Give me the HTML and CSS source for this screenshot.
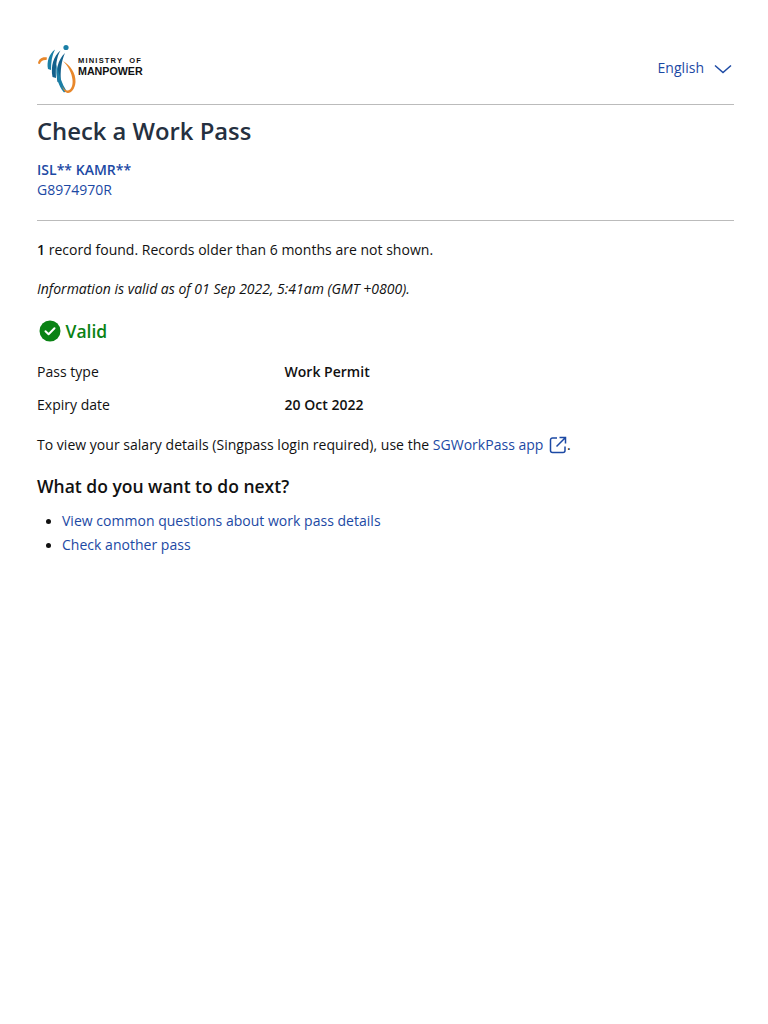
FILE: index.html
```html
<!DOCTYPE html>
<html lang="en">
<head>
<meta charset="utf-8">
<title>Check a Work Pass</title>
<link rel="stylesheet" href="styles.css">
</head>
<body>
<div class="page">
<header class="top">
  <div class="brand">
    <svg class="logo" width="40" height="50" viewBox="0 0 40 50">
      <circle cx="29" cy="3.500" r="2.600" fill="#1a7fa6"/>
      <path d="M1 19.500C1.500 15 5 12.500 10 13.500L9.500 16C6.500 15.500 4 16.500 2.800 20Z" fill="#e8872b"/>
      <path d="M11 25C9.500 18 12 10 18 5.500C15 11 14 18 14 26Z" fill="#1a7fa6"/>
      <path d="M15.500 33C13.500 22 16.500 12 23.500 6.500C19.500 13 18.500 22 19 34Z" fill="#12608c"/>
      <path d="M20.500 38C18.500 27 20.500 16 28 9C24.500 17 23 26 24 39Z" fill="#12608c"/>
      <path d="M19.500 20C18.500 31 21 42 27 48.500L29.500 47C25 40 22 31 19.500 20Z" fill="#1a7fa6"/>
      <path d="M26 17C33 21 39 29 38.500 38C38 45 34 49.500 30.500 49C28 48.500 26 45.500 25 42C27 45.500 29 47 31 46.500C34.500 45.500 36 41 35.500 36C35 29 31 22 26 17Z" fill="#e8872b"/>
    </svg>
    <div class="brand-text">
      <span class="brand-top">MINISTRY OF</span>
      <span class="brand-main">MANPOWER</span>
    </div>
  </div>
  <a class="lang">English
    <svg class="chev" width="18" height="10" viewBox="0 0 18 10" fill="none"><path d="M1 1.500L9 8.500L17 1.500" stroke="#1c49a4" stroke-width="1.500"/></svg>
  </a>
</header>
<main>
  <h1 class="title">Check a Work Pass</h1>
  <section class="person">
    <a class="name">ISL** KAMR**</a>
    <a class="fin">G8974970R</a>
  </section>
  <p class="found"><b>1</b> record found. Records older than 6 months are not shown.</p>
  <p class="asof">Information is valid as of 01 Sep 2022, 5:41am (GMT +0800).</p>
  <div class="status">
    <svg width="22" height="22" viewBox="0 0 22 22"><circle cx="11" cy="11" r="10.500" fill="#0a8214"/><path d="M6.500 11.200L9.600 14.200L15.500 8.300" fill="none" stroke="#fff" stroke-width="2" stroke-linecap="round" stroke-linejoin="round"/></svg>
    <span>Valid</span>
  </div>
  <dl class="details">
    <dt>Pass type</dt><dd>Work Permit</dd>
    <dt>Expiry date</dt><dd>20 Oct 2022</dd>
  </dl>
  <p class="salary">To view your salary details (Singpass login required), use the <a>SGWorkPass app <svg class="ext" width="18" height="18" viewBox="0 0 18 18" fill="none"><path d="M8 2H3.500A2 2 0 0 0 1.500 4V14.500A2 2 0 0 0 3.500 16.500H14A2 2 0 0 0 16 14.500V10.500" stroke="#1c49a4" stroke-width="1.500"/><path d="M7.500 10.500L16.500 1.500M10.500 1.500H16.500V7.500" stroke="#1c49a4" stroke-width="1.500"/></svg></a>.</p>
  <h2 class="next">What do you want to do next?</h2>
  <ul class="links">
    <li><a>View common questions about work pass details</a></li>
    <li><a>Check another pass</a></li>
  </ul>
</main>
</div>
</body>
</html>
```
FILE: styles.css
```css
* { box-sizing: border-box; }
html, body { margin: 0; background: #fff; }
body { font-family: "Open Sans", sans-serif; font-size: 14px; line-height: 20px; color: #111; letter-spacing: 0.020px; }
.page { padding: 44px 34px 0 37px; }
a { color: #1c49a4; }
b { font-weight: 600; }
.top { display: flex; justify-content: space-between; align-items: center; height: 61px; padding-bottom: 11px; border-bottom: 1px solid #bbb; }
.brand { display: flex; align-items: center; gap: 1px; }
.logo { display: block; }
.brand-text { display: flex; flex-direction: column; font-family: "Liberation Sans", sans-serif; font-weight: 700; color: #111; margin-top: -4px; }
.brand-top { font-size: 7.500px; line-height: 10px; letter-spacing: 1.200px; word-spacing: 3px; }
.brand-main { font-size: 10.700px; line-height: 11px; letter-spacing: 0; }
.lang { display: flex; align-items: center; gap: 10px; padding-right: 2px; margin-top: -1px; }
.chev { display: block; margin-top: 1px; }
.title { margin: 12px 0 0; font-size: 23.800px; line-height: 28px; font-weight: 600; color: #253040; letter-spacing: 0; }
.person { display: flex; flex-direction: column; margin-top: 15px; padding-bottom: 20px; border-bottom: 1px solid #bbb; }
.name { font-weight: 600; }
.found { margin: 19px 0 0; }
.asof { margin: 19px 0 0; font-style: italic; letter-spacing: 0; }
.status { display: flex; align-items: center; gap: 5px; margin-top: 20px; padding-left: 1.500px; font-size: 17.500px; line-height: 24px; font-weight: 600; color: #0a8214; letter-spacing: 0; }
.status svg { display: block; }
.details { display: grid; grid-template-columns: 247.500px 1fr; row-gap: 13px; margin: 19px 0 0; }
.details dd { margin: 0; font-weight: 600; }
.salary { margin: 20px 0 0; }
.ext { vertical-align: -4px; margin-left: 2px; }
.next { margin: 19px 0 0; font-size: 17.500px; line-height: 24px; font-weight: 600; letter-spacing: 0; }
.links { margin: 13px 0 0; padding-left: 25px; }
.links li { margin-bottom: 4px; }
.links li::marker { font-size: 13px; }
```
